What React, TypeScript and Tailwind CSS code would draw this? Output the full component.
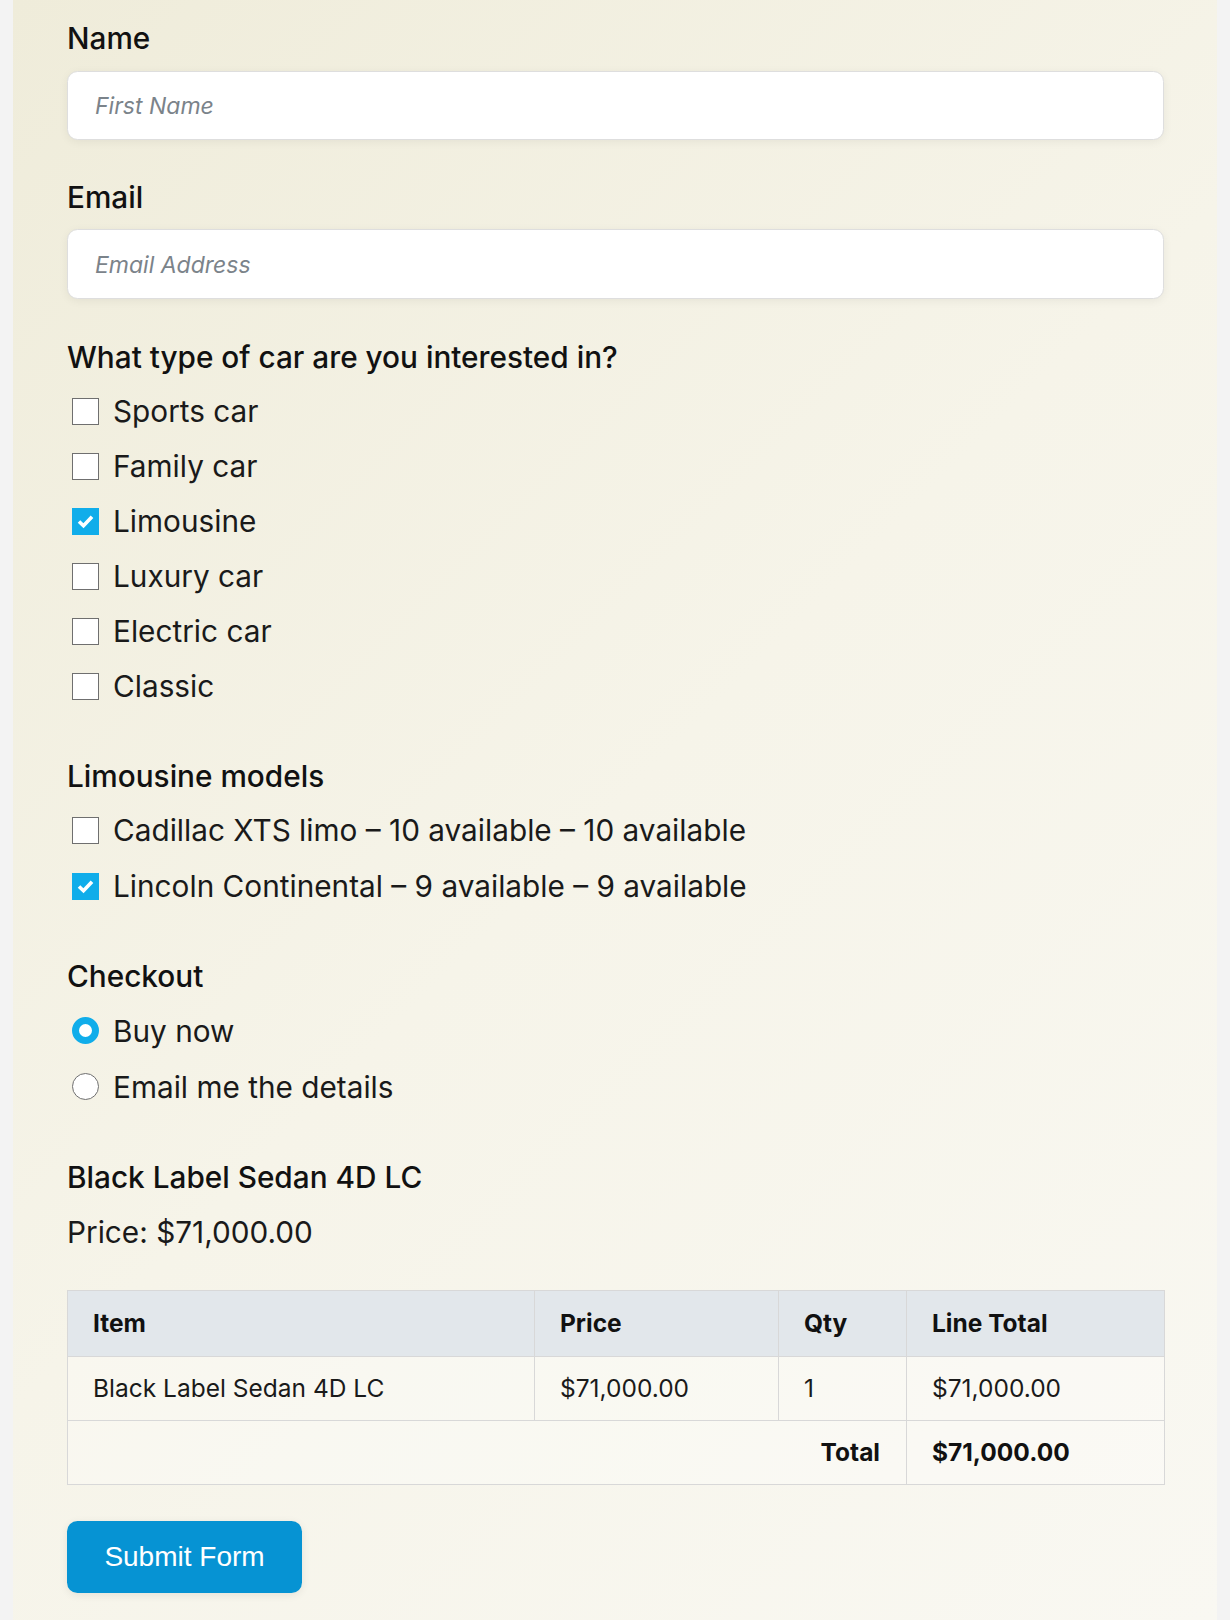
import React from "react";

function CheckBox({ checked }: { checked?: boolean }) {
  if (checked) {
    return (
      <span className="ml-[5px] flex h-[27px] w-[27px] shrink-0 items-center justify-center bg-[#10adea]">
        <svg viewBox="0 0 27 27" className="h-[27px] w-[27px]">
          <path d="M7 13.5 L11.5 17.8 L20 8.8" stroke="white" strokeWidth="3.6" fill="none" strokeLinejoin="miter" />
        </svg>
      </span>
    );
  }
  return <span className="ml-[5px] h-[27px] w-[27px] shrink-0 border-[1.5px] border-[#6f6f6f] bg-white" />;
}

function Radio({ checked }: { checked?: boolean }) {
  if (checked) {
    return <span className="ml-[5px] h-[27px] w-[27px] shrink-0 rounded-full border-[7.5px] border-[#10adea] bg-white" />;
  }
  return <span className="ml-[5px] h-[27px] w-[27px] shrink-0 rounded-full border-[1.5px] border-[#6f6f6f] bg-white" />;
}

function Option({ label, checked, radio, tall }: { label: string; checked?: boolean; radio?: boolean; tall?: boolean }) {
  return (
    <div className={(tall ? "h-[56px]" : "h-[55px]") + " flex items-center gap-[14px]"}>
      {radio ? <Radio checked={checked} /> : <CheckBox checked={checked} />}
      <span className="text-[29.75px] leading-[44.6px] text-[#1a1a1a]">{label}</span>
    </div>
  );
}

function Label({ children, className = "" }: { children: React.ReactNode; className?: string }) {
  return <div className={"text-[29.75px] font-medium leading-[44.6px] text-[#111111] " + className}>{children}</div>;
}

export default function App() {
  return (
    <div className="min-h-[1620px] bg-[#f3f3f3] px-[13px] font-['Inter',sans-serif]">
      <div className="min-h-[1620px] bg-[linear-gradient(135deg,#efecda_0%,#f6f4e9_50%,#f9f8f2_100%)] pb-[27px] pl-[54px] pr-[53px] pt-[16px]">
        <Label>Name</Label>
        <div className="mt-[10px] flex h-[69px] items-center rounded-[10.5px] border border-[#dedede] bg-white pl-[27px] shadow-[0_2px_10px_rgba(0,0,0,0.06)]">
          <span className="pt-[2px] text-[23px] italic text-[#7b838a]">First Name</span>
        </div>

        <Label className="mt-[35px]">Email</Label>
        <div className="mt-[10px] flex h-[70px] items-center rounded-[10.5px] border border-[#dedede] bg-white pl-[27px] shadow-[0_2px_10px_rgba(0,0,0,0.06)]">
          <span className="pt-[2px] text-[23px] italic text-[#7b838a]">Email Address</span>
        </div>

        <Label className="mt-[36px]">What type of car are you interested in?</Label>
        <div className="mt-[4px] flex flex-col">
          <Option label="Sports car" />
          <Option label="Family car" />
          <Option label="Limousine" checked />
          <Option label="Luxury car" />
          <Option label="Electric car" />
          <Option label="Classic" />
        </div>

        <Label className="mt-[40px]">Limousine models</Label>
        <div className="mt-[4px] flex flex-col">
          <Option label="Cadillac XTS limo – 10 available – 10 available" tall />
          <Option label="Lincoln Continental – 9 available – 9 available" checked tall />
        </div>

        <Label className="mt-[40px]">Checkout</Label>
        <div className="mt-[4px] flex flex-col">
          <Option label="Buy now" radio checked tall />
          <Option label="Email me the details" radio tall />
        </div>

        <Label className="mt-[40px]">Black Label Sedan 4D LC</Label>
        <div className="mt-[10px] text-[29.75px] leading-[44.6px] text-[#1a1a1a]">Price: $71,000.00</div>

        <table className="mt-[36px] w-full table-fixed border-collapse text-[24.5px] text-[#1a1a1a]">
          <colgroup>
            <col className="w-[467px]" />
            <col className="w-[244px]" />
            <col className="w-[128px]" />
            <col className="w-[258px]" />
          </colgroup>
          <thead>
            <tr className="h-[66px] bg-[#e2e7eb]">
              <th className="border border-[#d8d8d8] px-[25px] text-left font-bold text-[#111]">Item</th>
              <th className="border border-[#d8d8d8] px-[25px] text-left font-bold text-[#111]">Price</th>
              <th className="border border-[#d8d8d8] px-[25px] text-left font-bold text-[#111]">Qty</th>
              <th className="border border-[#d8d8d8] px-[25px] text-left font-bold text-[#111]">Line Total</th>
            </tr>
          </thead>
          <tbody>
            <tr className="h-[64px] bg-white/30">
              <td className="border border-[#d8d8d8] px-[25px]">Black Label Sedan 4D LC</td>
              <td className="border border-[#d8d8d8] px-[25px]">$71,000.00</td>
              <td className="border border-[#d8d8d8] px-[25px]">1</td>
              <td className="border border-[#d8d8d8] px-[25px]">$71,000.00</td>
            </tr>
            <tr className="h-[64px] bg-white/30">
              <td colSpan={3} className="border border-[#d8d8d8] px-[26px] text-right font-bold text-[#111]">Total</td>
              <td className="border border-[#d8d8d8] px-[25px] font-bold text-[#111]">$71,000.00</td>
            </tr>
          </tbody>
        </table>

        <button className="mt-[36px] flex h-[72px] w-[235px] items-center justify-center rounded-[10.5px] bg-[#0693d3] font-['Liberation_Sans',Arial,sans-serif] text-[28px] text-white shadow-[0_2px_8px_rgba(0,0,0,0.08)]">
          Submit Form
        </button>
      </div>
    </div>
  );
}
